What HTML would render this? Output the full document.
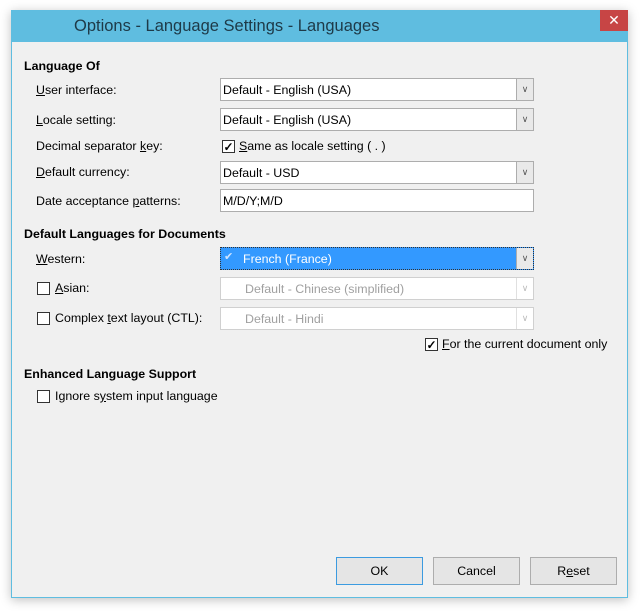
<!DOCTYPE html>
<html><head><meta charset="utf-8"><style>
*{margin:0;padding:0;box-sizing:border-box}
body{width:640px;height:611px;background:#fff;position:relative;overflow:hidden;font-family:"Liberation Sans",sans-serif;font-size:12.4px;color:#000}
.win{position:absolute;left:11px;top:10px;width:617px;height:588px;background:#f0f0f0;border:1px solid #5fbde0;box-shadow:0 2px 10px rgba(0,0,0,.25)}
.tb{position:absolute;left:0;top:0;width:100%;height:31px;background:#5fbde0}
.title{position:absolute;left:62px;top:6px;font-size:16.5px;color:#1e3a48}
.close{position:absolute;right:-1px;top:-1px;width:28px;height:21px;background:#c74545;color:#fff;text-align:center;font-size:14px;line-height:20px}
.a{position:absolute;white-space:nowrap}
.h{font-weight:bold}
.f{position:absolute;background:#fff;border:1px solid #adadad;height:23px;padding:4px 0 0 2px;white-space:nowrap}
.f .dd{position:absolute;right:0;top:0;width:17px;height:21px;background:#e9e9e9;border-left:1px solid #adadad;color:#555;font-size:9px;text-align:center;line-height:21px}
.dis{color:#a0a0a0;border-color:#d0d0d0}
.dis .dd{background:#fff;border-left-color:#e0e0e0;color:#bbb}
.cb{position:absolute;width:13px;height:13px;border:1px solid #333;background:#fff;font-size:12px;line-height:12px;text-align:center;font-weight:bold}
.btn{position:absolute;width:87px;height:28px;border:1px solid #adadad;background:#e5e5e5;text-align:center;line-height:26px}
u{text-decoration:underline}
</style></head><body>
<div class="win">
<div class="tb"><div class="title">Options - Language Settings - Languages</div><div class="close">✕</div></div>
<div class="a h" style="left:12px;top:48px">Language Of</div>
<div class="a" style="left:24px;top:72px"><u>U</u>ser interface:</div>
<div class="f" style="left:208px;top:67px;width:314px">Default - English (USA)<div class="dd">∨</div></div>
<div class="a" style="left:24px;top:102px"><u>L</u>ocale setting:</div>
<div class="f" style="left:208px;top:97px;width:314px">Default - English (USA)<div class="dd">∨</div></div>
<div class="a" style="left:24px;top:128px">Decimal separator <u>k</u>ey:</div>
<div class="cb" style="left:210px;top:129px">✓</div>
<div class="a" style="left:227px;top:128px"><u>S</u>ame as locale setting ( . )</div>
<div class="a" style="left:24px;top:154px"><u>D</u>efault currency:</div>
<div class="f" style="left:208px;top:150px;width:314px">Default - USD<div class="dd">∨</div></div>
<div class="a" style="left:24px;top:183px">Date acceptance <u>p</u>atterns:</div>
<div class="f" style="left:208px;top:178px;width:314px">M/D/Y;M/D</div>
<div class="a h" style="left:12px;top:216px">Default Languages for Documents</div>
<div class="a" style="left:24px;top:241px"><u>W</u>estern:</div>
<div class="f" style="left:208px;top:236px;width:314px;background:#3399ff;color:#fff;border:1px dotted #333;padding-left:22px">French (France)<span style="position:absolute;left:3px;top:2px;font-size:11px;color:#cfe4ff">✔</span><div class="dd" style="background:#e9e9e9">∨</div></div>
<div class="cb" style="left:25px;top:271px"></div>
<div class="a" style="left:43px;top:270px"><u>A</u>sian:</div>
<div class="f dis" style="left:208px;top:266px;width:314px;padding-left:24px">Default - Chinese (simplified)<div class="dd">∨</div></div>
<div class="cb" style="left:25px;top:301px"></div>
<div class="a" style="left:43px;top:300px">Complex <u>t</u>ext layout (CTL):</div>
<div class="f dis" style="left:208px;top:296px;width:314px;padding-left:24px">Default - Hindi<div class="dd">∨</div></div>
<div class="cb" style="left:413px;top:327px">✓</div>
<div class="a" style="left:430px;top:326px"><u>F</u>or the current document only</div>
<div class="a h" style="left:12px;top:356px">Enhanced Language Support</div>
<div class="cb" style="left:25px;top:379px"></div>
<div class="a" style="left:43px;top:378px">Ignore s<u>y</u>stem input language</div>
<div class="btn" style="left:324px;top:546px;border-color:#3c9be0">OK</div>
<div class="btn" style="left:421px;top:546px">Cancel</div>
<div class="btn" style="left:518px;top:546px">R<u>e</u>set</div>
</div>
</body></html>
